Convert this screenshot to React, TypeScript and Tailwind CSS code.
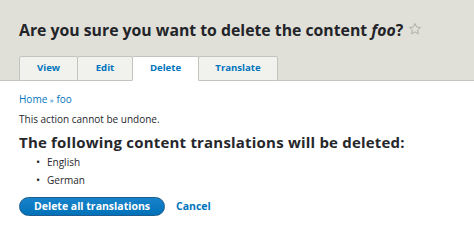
import React from "react";

const font = { fontFamily: '"Open Sans", "DejaVu Sans", sans-serif' };

function Star() {
  return (
    <svg width="14" height="14" viewBox="0 0 24 24" className="ml-[5px] -mt-[3px]">
      <path
        d="M12 2.5l2.8 6.2 6.7.6-5.1 4.5 1.5 6.6L12 17l-5.9 3.4 1.5-6.6-5.1-4.5 6.7-.6z"
        fill="none"
        stroke="#a8a8a0"
        strokeWidth="1.5"
        strokeLinejoin="round"
      />
    </svg>
  );
}

export default function App() {
  const tabs = ["View", "Edit", "Delete", "Translate"];
  const widths = ["w-[59px]", "w-[56px]", "w-[67px]", "w-[80px]"];
  return (
    <div className="w-[474px] h-[236px] bg-white text-[#26272b]" style={font}>
      <div className="bg-[#e0e0d8] border-b border-[#c5c5bf] pl-[19px] pt-[20px] flex flex-col">
        <div className="flex items-center h-[20px]">
          <h1 className="text-[15.8px] font-bold text-[#232429] leading-[20px] whitespace-nowrap">
            Are you sure you want to delete the content <em>foo</em>?
          </h1>
          <Star />
        </div>
        <div className="flex mt-[16px] -mb-px">
          {tabs.map((t, i) => (
            <div
              key={t}
              className={`${widths[i]} h-[25px] flex items-center justify-center text-[9.6px] font-bold text-[#0074bd] border border-[#c4c4be] rounded-t-[2px] ${
                i === 0 ? "" : "-ml-px"
              } ${t === "Delete" ? "bg-white border-b-white relative z-10" : "bg-[#f1f1ed]"}`}
            >
              {t}
            </div>
          ))}
        </div>
      </div>
      <div className="pl-[19px] pt-[11px]">
        <div className="text-[10px] text-[#0074bd] leading-[14px]">
          Home <span className="text-[8px]">»</span> foo
        </div>
        <p className="text-[10px] mt-[5px] leading-[14px]">This action cannot be undone.</p>
        <h2 className="text-[15px] font-bold mt-[7px] leading-[18px] tracking-[0.2px]">
          The following content translations will be deleted:
        </h2>
        <ul className="mt-[2px] ml-[17px] text-[10px] leading-[18px]">
          <li className="flex items-center">
            <span className="w-[11px] text-[11px]">•</span>English
          </li>
          <li className="flex items-center">
            <span className="w-[11px] text-[11px]">•</span>German
          </li>
        </ul>
        <div className="flex items-center mt-[8px]">
          <button className="w-[146px] h-[19px] rounded-full bg-gradient-to-b from-[#1683ca] to-[#0071b8] border border-[#1e5c90] text-white text-[10.5px] font-bold flex items-center justify-center">
            Delete all translations
          </button>
          <a className="ml-[11px] text-[10.5px] font-bold text-[#0074bd]">Cancel</a>
        </div>
      </div>
    </div>
  );
}
